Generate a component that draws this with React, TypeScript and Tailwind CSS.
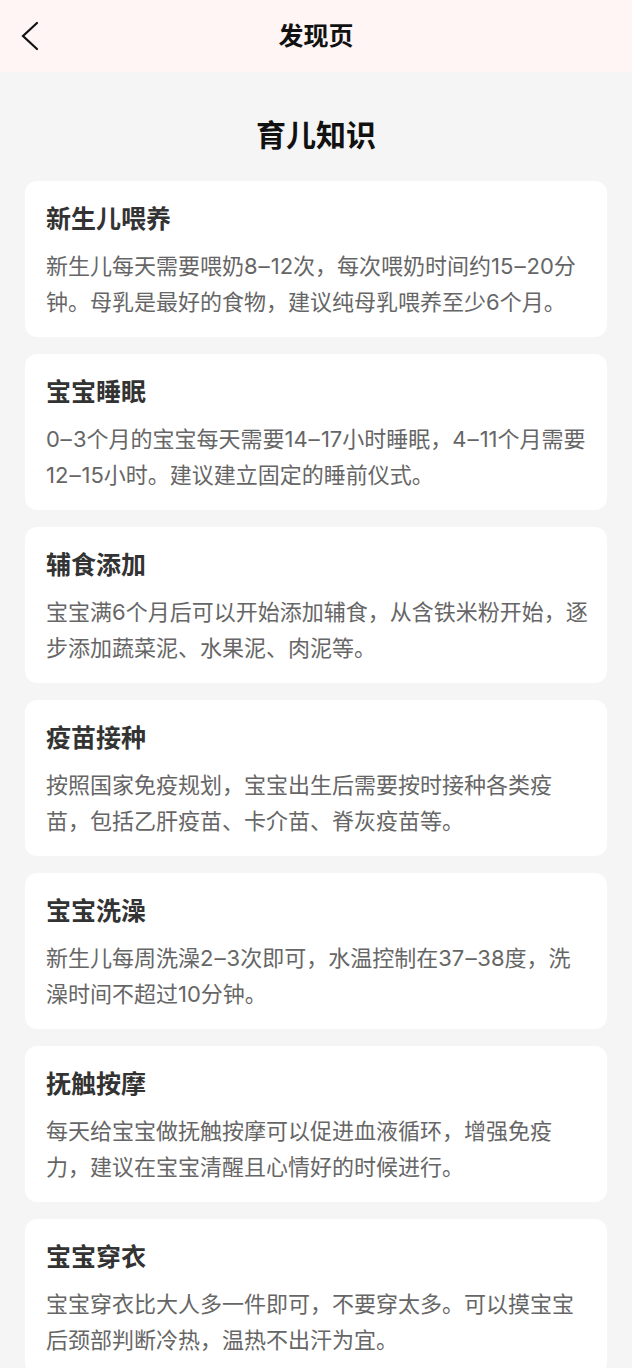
import React from "react";

const items = [
  { t: "新生儿喂养", d: "新生儿每天需要喂奶8-12次，每次喂奶时间约15-20分钟。母乳是最好的食物，建议纯母乳喂养至少6个月。" },
  { t: "宝宝睡眠", d: "0-3个月的宝宝每天需要14-17小时睡眠，4-11个月需要12-15小时。建议建立固定的睡前仪式。" },
  { t: "辅食添加", d: "宝宝满6个月后可以开始添加辅食，从含铁米粉开始，逐步添加蔬菜泥、水果泥、肉泥等。" },
  { t: "疫苗接种", d: "按照国家免疫规划，宝宝出生后需要按时接种各类疫苗，包括乙肝疫苗、卡介苗、脊灰疫苗等。" },
  { t: "宝宝洗澡", d: "新生儿每周洗澡2-3次即可，水温控制在37-38度，洗澡时间不超过10分钟。" },
  { t: "抚触按摩", d: "每天给宝宝做抚触按摩可以促进血液循环，增强免疫力，建议在宝宝清醒且心情好的时候进行。" },
  { t: "宝宝穿衣", d: "宝宝穿衣比大人多一件即可，不要穿太多。可以摸宝宝后颈部判断冷热，温热不出汗为宜。" },
];

function Desc({ text }: { text: string }) {
  const parts = text.split("-");
  return (
    <>
      {parts.map((p, i) => (
        <React.Fragment key={i}>
          {p}
          {i < parts.length - 1 && <span className="inline-block mx-[1.5px] scale-x-[1.6]">-</span>}
        </React.Fragment>
      ))}
    </>
  );
}

export default function App() {
  return (
    <div
      className="min-h-[1368px] bg-[#f5f5f5]"
      style={{ fontFamily: 'Inter, "Noto Sans CJK SC", "Noto Sans", sans-serif' }}
    >
      <div className="relative h-[72px] bg-[#fff5f5] flex items-center justify-center">
        <svg className="absolute left-[18px] top-[20px]" width="24" height="32" viewBox="0 0 24 32" fill="none">
          <polyline points="19,3 5,16 19,29" stroke="#111" strokeWidth="2.2" strokeLinecap="round" strokeLinejoin="miter" />
        </svg>
        <h1 className="text-[25px] leading-none font-bold text-[#111]">发现页</h1>
      </div>
      <div className="pt-[43px] px-[25px] pb-[20px]">
        <h2 className="text-[30px] leading-[40px] font-bold text-[#111] text-center">育儿知识</h2>
        <div className="mt-[26px] flex flex-col gap-[17px]">
          {items.map((it) => (
            <div key={it.t} className="bg-white rounded-[12px] pl-[21px] pr-[18px] pt-[20px] pb-[17px]">
              <div className="text-[25px] leading-[36px] font-bold text-[#333]">{it.t}</div>
              <p className="mt-[11px] text-[22px] leading-[36px] text-[#666]">
                <Desc text={it.d} />
              </p>
            </div>
          ))}
        </div>
      </div>
    </div>
  );
}
